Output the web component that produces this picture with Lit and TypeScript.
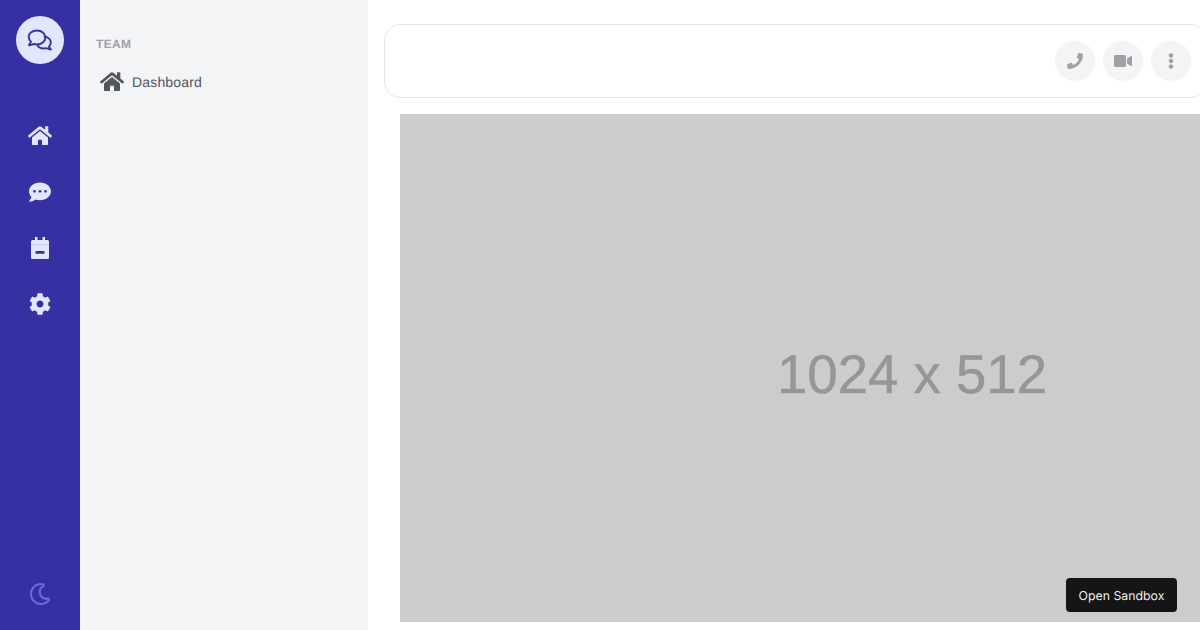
import { LitElement, html, css, svg } from "lit";
import { customElement } from "lit/decorators.js";

const HOME = "M280.37 148.26L96 300.11V464a16 16 0 0 0 16 16l112.06-.29a16 16 0 0 0 15.92-16V368a16 16 0 0 1 16-16h64a16 16 0 0 1 16 16v95.64a16 16 0 0 0 16 16.05L464 480a16 16 0 0 0 16-16V300L295.67 148.26a12.19 12.19 0 0 0-15.3 0zM571.6 251.47L488 182.56V44.05a12 12 0 0 0-12-12h-56a12 12 0 0 0-12 12v72.61L318.47 43a48 48 0 0 0-61 0L4.34 251.47a12 12 0 0 0-1.6 16.9l25.5 31A12 12 0 0 0 45.15 301l235.22-193.74a12.19 12.19 0 0 1 15.3 0L530.9 301a12 12 0 0 0 16.9-1.6l25.5-31a12 12 0 0 0-1.7-16.93z";
const DOTS = "M256 32C114.6 32 0 125.1 0 240c0 49.6 21.4 95 57 130.7C44.5 421.1 2.7 466 2.2 466.5c-2.2 2.3-2.8 5.7-1.5 8.7S4.8 480 8 480c66.3 0 116-31.8 140.6-51.4 32.7 12.3 69 19.4 107.4 19.4 141.4 0 256-93.1 256-208S397.4 32 256 32zM128 272c-17.7 0-32-14.3-32-32s14.3-32 32-32 32 14.3 32 32-14.3 32-32 32zm128 0c-17.7 0-32-14.3-32-32s14.3-32 32-32 32 14.3 32 32-14.3 32-32 32zm128 0c-17.7 0-32-14.3-32-32s14.3-32 32-32 32 14.3 32 32-14.3 32-32 32z";
const COG = "M487.4 315.7l-42.6-24.6c4.3-23.2 4.3-47 0-70.2l42.6-24.6c4.9-2.8 7.1-8.6 5.5-14-11.1-35.6-30-67.8-54.7-94.6-3.8-4.1-10-5.1-14.8-2.3L380.8 110c-17.9-15.4-38.5-27.3-60.8-35.1V25.8c0-5.6-3.9-10.5-9.4-11.7-36.7-8.2-74.3-7.8-109.2 0-5.5 1.2-9.4 6.1-9.4 11.7V75c-22.2 7.9-42.8 19.8-60.8 35.1L88.7 85.5c-4.9-2.8-11-1.9-14.8 2.3-24.7 26.7-43.6 58.9-54.7 94.6-1.7 5.4.6 11.2 5.5 14L67.3 221c-4.3 23.2-4.3 47 0 70.2l-42.6 24.6c-4.9 2.8-7.1 8.6-5.5 14 11.1 35.6 30 67.8 54.7 94.6 3.8 4.1 10 5.1 14.8 2.3l42.6-24.6c17.9 15.4 38.5 27.3 60.8 35.1v49.2c0 5.6 3.9 10.5 9.4 11.7 36.7 8.2 74.3 7.8 109.2 0 5.5-1.2 9.4-6.1 9.4-11.7v-49.2c22.2-7.9 42.8-19.8 60.8-35.1l42.6 24.6c4.9 2.8 11 1.9 14.8-2.3 24.7-26.7 43.6-58.9 54.7-94.6 1.5-5.5-.7-11.3-5.6-14.1zM256 336c-44.1 0-80-35.9-80-80s35.9-80 80-80 80 35.9 80 80-35.9 80-80 80z";
const PHONE = "M493.4 24.6l-104-24c-11.3-2.6-22.9 3.3-27.5 13.9l-48 112c-4.2 9.8-1.4 21.3 6.9 28l60.6 49.6c-36 76.7-98.9 140.5-177.2 177.2l-49.6-60.6c-6.8-8.3-18.2-11.1-28-6.9l-112 48C3.9 366.5-2 378.1.6 389.4l24 104C27.1 504.2 36.7 512 48 512c256.1 0 464-207.5 464-464 0-11.2-7.7-20.9-18.6-23.4z";
const VIDEO = "M336.2 64H47.8C21.4 64 0 85.4 0 111.8v288.4C0 426.6 21.4 448 47.8 448h288.4c26.4 0 47.8-21.4 47.8-47.8V111.8c0-26.4-21.4-47.8-47.8-47.8zm189.4 37.7L416 177.3v157.4l109.6 75.5c21.2 14.6 50.4-.3 50.4-25.8V127.5c0-25.4-29.1-40.4-50.4-25.8z";
const VDOTS = "M96 184c39.8 0 72 32.2 72 72s-32.2 72-72 72-72-32.2-72-72 32.2-72 72-72zM24 80c0 39.8 32.2 72 72 72s72-32.2 72-72S135.8 8 96 8 24 40.2 24 80zm0 352c0 39.8 32.2 72 72 72s72-32.2 72-72-32.2-72-72-72-72 32.2-72 72z";
const MOON = "M279.135 512c78.756 0 150.982-35.804 198.844-94.775 28.27-34.831-2.558-85.722-46.249-77.401-82.348 15.683-158.272-47.268-158.272-130.792 0-48.424 26.06-92.292 67.434-115.836 38.745-22.05 28.999-80.788-15.022-88.919A257.936 257.936 0 0 0 279.135 0c-141.36 0-256 114.575-256 256 0 141.36 114.576 256 256 256zm0-464c12.985 0 25.689 1.201 38.016 3.478-54.76 31.163-91.693 90.042-91.693 157.554 0 113.848 103.641 199.2 215.252 177.944C402.574 433.964 344.366 464 279.135 464c-114.875 0-208-93.125-208-208s93.125-208 208-208z";

function icon(d: string, w: number, vbW: number) {
  return html`<svg width=${w} viewBox="0 0 ${vbW} 512" fill="currentColor">${svg`<path d=${d}></path>`}</svg>`;
}

@customElement("app-root")
export class AppRoot extends LitElement {
  static styles = css`
    :host {
      display: flex;
      width: 1200px;
      height: 630px;
      overflow: hidden;
      position: relative;
      background: #fff;
      font-family: "Liberation Sans", Arial, sans-serif;
      text-rendering: geometricPrecision;
    }
    svg { display: block; flex: none; }
    .rail {
      flex: none;
      width: 80px;
      background: #3730a3;
      color: #e0e7ff;
      display: flex;
      flex-direction: column;
      align-items: center;
      padding: 16px 0 24px;
      box-sizing: border-box;
    }
    .logo {
      width: 48px;
      height: 48px;
      border-radius: 50%;
      background: #e0e7ff;
      color: #3730a3;
      display: flex;
      align-items: center;
      justify-content: center;
    }
    .nav {
      display: flex;
      flex-direction: column;
      margin-top: 44px;
    }
    .nav-item {
      width: 56px;
      height: 56px;
      display: flex;
      align-items: center;
      justify-content: center;
    }
    .moon { margin-top: auto; color: #6a6cdc; height: 24px; display: flex; align-items: center; }
    .panel {
      flex: none;
      width: 288px;
      background: #f3f4f6;
      padding: 36px 16px 0;
      box-sizing: border-box;
    }
    .panel-title {
      font-size: 12px;
      line-height: 16px;
      font-weight: 700;
      color: #a1a1aa;
      text-transform: uppercase;
      letter-spacing: 0.025em;
    }
    .panel-row {
      display: flex;
      align-items: center;
      gap: 8px;
      margin-top: 18px;
      padding-left: 4px;
      height: 24px;
      color: #52555f;
      font-size: 14px;
      letter-spacing: 0.012em;
    }
    .main { flex: none; width: 839px; }
    .head {
      margin: 24px 0 16px 16px;
      height: 74px;
      box-sizing: border-box;
      border: 1px solid #e5e7eb;
      border-radius: 16px;
      display: flex;
      align-items: center;
      justify-content: flex-end;
      gap: 8px;
      padding: 0 15px;
    }
    .round {
      width: 40px;
      height: 40px;
      border-radius: 50%;
      background: #f3f4f6;
      color: #a1a1a5;
      display: flex;
      align-items: center;
      justify-content: center;
    }
    .picture {
      margin-left: 32px;
      width: 1024px;
      height: 508px;
      background: #cccccc;
      display: flex;
      align-items: center;
      justify-content: center;
      padding-top: 14px;
      box-sizing: border-box;
      color: #969696;
      font-size: 54.6px;
      line-height: 1;
      -webkit-text-stroke: 0.4px #969696;
    }
    .sandbox {
      position: absolute;
      right: 23px;
      bottom: 18px;
      width: 111px;
      height: 34px;
      border-radius: 4px;
      background: #151515;
      color: #eeeeee;
      font-family: Inter, sans-serif;
      font-size: 12.3px;
      display: flex;
      align-items: center;
      justify-content: center;
    }
  `;

  render() {
    return html`
      <aside class="rail">
        <div class="logo">
          <svg width="26" height="24" viewBox="0 0 26 24" fill="none" stroke="currentColor" stroke-width="1.9" stroke-linejoin="round" stroke-linecap="round">
            <path d="M10 2.500C5.300 2.500 1.700 5.300 1.700 9c0 1.800.9 3.400 2.300 4.600L2 17.300l5-1.300c1 .3 2 .4 3 .4 4.700 0 8.300-3 8.300-6.900S14.700 2.500 10 2.500z"></path>
            <path d="M17.500 8.500c3.300.5 6.300 2.800 6.300 6 0 1.600-.7 3-1.900 4.100l2 3-5-1.400c-.8.200-1.500.300-2.300.300-2.800 0-5-1.100-6.100-3"></path>
          </svg>
        </div>
        <nav class="nav">
          <div class="nav-item">${icon(HOME, 24, 576)}</div>
          <div class="nav-item">${icon(DOTS, 22, 512)}</div>
          <div class="nav-item">
            <svg width="18" height="22" viewBox="0 0 18 22" fill="currentColor">
              <path fill-rule="evenodd" d="M4 0h2.500v3h5V0H14v3h2.500A1.500 1.500 0 0 1 18 4.500v16a1.500 1.500 0 0 1-1.500 1.500h-15A1.500 1.500 0 0 1 0 20.500v-16A1.500 1.500 0 0 1 1.500 3H4zM4.500 14v2.800h9V14z"></path>
              <path d="M0 7.300h18v.8H0z" fill="#3730a3" opacity=".2"></path>
            </svg>
          </div>
          <div class="nav-item">${icon(COG, 22, 512)}</div>
        </nav>
        <div class="moon">${icon(MOON, 22, 512)}</div>
      </aside>
      <section class="panel">
        <div class="panel-title">Team</div>
        <div class="panel-row">${icon(HOME, 24, 576)}<span>Dashboard</span></div>
      </section>
      <main class="main">
        <header class="head">
          <div class="round">${icon(PHONE, 16, 512)}</div>
          <div class="round">${icon(VIDEO, 18, 576)}</div>
          <div class="round">${icon(VDOTS, 6, 192)}</div>
        </header>
        <div class="picture">1024 x 512</div>
      </main>
      <div class="sandbox">Open Sandbox</div>
    `;
  }
}
